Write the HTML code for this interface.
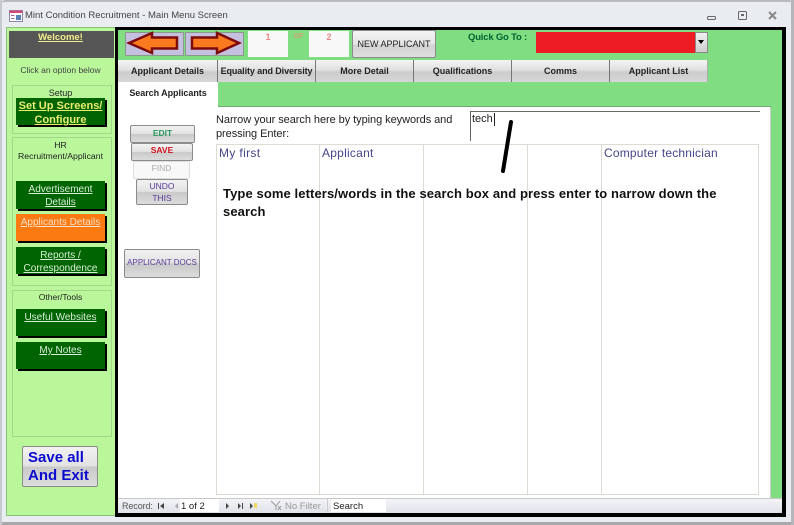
<!DOCTYPE html>
<html><head><meta charset="utf-8">
<style>
html,body{margin:0;padding:0}
body{width:794px;height:525px;overflow:hidden;position:relative;background:#fff;font-family:"Liberation Sans",sans-serif;}
div,span.a{position:absolute;box-sizing:border-box}
.t{white-space:nowrap;text-align:center;line-height:1}
.g{background:#006400;color:#d8eed8;text-decoration:underline;font-size:10px;text-align:center;line-height:13px;box-shadow:2px 2px 0 #000;padding-top:2px;white-space:nowrap}
.gb{background:linear-gradient(#f2f2f2 0,#e2e2e2 48%,#c9c9c9 52%,#dcdcdc 100%);border:1px solid #8b8b8b;border-radius:2px;text-align:center}
.tab{top:60px;height:22px;background:linear-gradient(#f4f4f4,#e0e0e0 45%,#cccccc 55%,#d6d6d6);border-right:1px solid #777;font-size:9px;font-weight:bold;text-align:center;line-height:23px;color:#222;white-space:nowrap}
.box{left:12px;width:100px;border:1px solid #a3d68a}
.v{top:144px;width:1px;height:350px;background:#dcdcd4}
</style></head><body>
<!-- window -->
<div style="left:0;top:0;width:794px;height:525px;background:#e9ecf1;border-top:2px solid #b8babd;border-radius:5px 5px 0 0"></div>
<div style="left:0;top:522px;width:794px;height:3px;background:#a8a8a8"></div>
<div style="left:0;top:0;width:2px;height:525px;background:#c6c9cd"></div>
<div style="left:791px;top:0;width:3px;height:525px;background:#b4b6ba"></div>
<!-- title -->
<svg style="position:absolute;left:9px;top:10px" width="14" height="13"><rect x=".5" y=".5" width="13" height="11" fill="#fff" stroke="#8a8aa8"/><rect x=".5" y=".5" width="13" height="2.5" fill="#d14a7a"/><rect x="2" y="5" width="3.5" height="1" fill="#9a6aa0"/><rect x="2" y="8" width="3.5" height="1" fill="#9a6aa0"/><rect x="7" y="5" width="5" height="5" fill="#5a80b8"/></svg>
<div class="t" style="left:25px;top:11px;font-size:9.5px;color:#444">Mint Condition Recruitment - Main Menu Screen</div>
<svg style="position:absolute;left:706px;top:8px" width="74" height="14" fill="none" stroke="#666"><rect x="1.5" y="8.5" width="8" height="3" rx="1"/><rect x="32.5" y="3.5" width="8" height="8" rx="1"/><rect x="35" y="6" width="3" height="2" fill="#666" stroke="none"/><path d="M63 4l7 7M70 4l-7 7" stroke="#888" stroke-width="2"/></svg>
<!-- sidebar -->
<div style="left:6px;top:27px;width:110px;height:489px;background:#baf79b;border:1px solid #8cc07a"></div>
<div style="left:9px;top:31px;width:105px;height:27px;background:#565656"></div>
<div class="t" style="left:9px;top:33px;width:103px;font-size:9.5px;font-weight:bold;color:#f4f08c;text-decoration:underline">Welcome!</div>
<div class="t" style="left:9px;top:66px;width:103px;font-size:8.5px;color:#444">Click an option below</div>
<div class="box" style="top:85px;height:49px"></div>
<div class="t" style="left:12px;top:89px;width:97px;font-size:9px;color:#222">Setup</div>
<div class="g" style="left:16px;top:98px;width:89px;height:27px;color:#ecec70;font-weight:bold;font-size:11px;padding-top:1px;line-height:14px">Set Up Screens/<br>Configure</div>
<div class="box" style="top:137px;height:149px"></div>
<div class="t" style="left:12px;top:140px;width:97px;font-size:8.7px;color:#222;line-height:11px">HR<br>Recruitment/Applicant</div>
<div class="g" style="left:16px;top:181px;width:89px;height:28px">Advertisement<br>Details</div>
<div class="g" style="left:16px;top:214px;width:89px;height:27px;background:#fb7a12;color:#f4e0c8">Applicants Details</div>
<div class="g" style="left:16px;top:247px;width:89px;height:27px">Reports /<br>Correspondence</div>
<div class="box" style="top:290px;height:147px"></div>
<div class="t" style="left:12px;top:293px;width:97px;font-size:8.5px;color:#222">Other/Tools</div>
<div class="g" style="left:16px;top:309px;width:89px;height:27px">Useful Websites</div>
<div class="g" style="left:16px;top:342px;width:89px;height:27px">My Notes</div>
<div class="gb" style="left:22px;top:446px;width:76px;height:41px;color:#0a0ad0;font-weight:bold;font-size:15px;line-height:18px;padding-top:2px;text-align:left;padding-left:5px;white-space:nowrap">Save all<br>And Exit</div>
<!-- frame -->
<div style="left:115px;top:27px;width:671px;height:490px;background:#000"></div>
<div style="left:118px;top:30px;width:664px;height:483px;background:#80dd82"></div>
<!-- arrows -->
<div style="left:125px;top:32px;width:59px;height:24px;background:#c5bfe0;border:1px solid #8a9a8a"></div>
<div style="left:185px;top:32px;width:59px;height:24px;background:#c5bfe0;border:1px solid #8a9a8a"></div>
<svg style="position:absolute;left:125px;top:30px" width="120" height="28"><path d="M4 13 L27 3 V7.5 H52 V18.5 H27 V23 Z" fill="#fb7a20" stroke="#7d0c0c" stroke-width="2.5"/><path d="M67 7.5 H92 V3 L114 13 L92 23 V18.5 H67 Z" fill="#fb7a20" stroke="#7d0c0c" stroke-width="2.5"/></svg>
<div style="left:248px;top:31px;width:40px;height:26px;background:#f8f8f8"></div>
<div class="t" style="left:248px;top:33px;width:40px;font-size:9px;font-weight:bold;color:#e88a8a">1</div>
<div class="t" style="left:288px;top:33px;width:21px;font-size:7px;font-weight:bold;color:#d8a070">OF</div>
<div style="left:309px;top:31px;width:40px;height:26px;background:#f8f8f8"></div>
<div class="t" style="left:309px;top:33px;width:40px;font-size:9px;font-weight:bold;color:#e88a8a">2</div>
<div class="gb" style="left:352px;top:30px;width:84px;height:28px;font-size:9px;line-height:26px;color:#222;background:linear-gradient(#f4f4f4,#e4e4e4 50%,#d2d2d2 55%,#dedede);white-space:nowrap">NEW APPLICANT</div>
<div class="t" style="left:468px;top:33px;font-size:9.5px;font-weight:bold;color:#063;letter-spacing:-.2px">Quick Go To :</div>
<div style="left:536px;top:32px;width:160px;height:21px;background:#ee1c25"></div>
<div style="left:695px;top:32px;width:13px;height:21px;background:linear-gradient(#f0f0f0,#cfcfcf);border:1px solid #8a8a8a"></div>
<svg style="position:absolute;left:698px;top:40px" width="7" height="5"><path d="M0 0H6L3 4Z" fill="#000"/></svg>
<!-- tabs -->
<div class="tab" style="left:118px;width:100px">Applicant Details</div>
<div class="tab" style="left:218px;width:98px;letter-spacing:-.1px">Equality and Diversity</div>
<div class="tab" style="left:316px;width:98px">More Detail</div>
<div class="tab" style="left:414px;width:98px">Qualifications</div>
<div class="tab" style="left:512px;width:98px">Comms</div>
<div class="tab" style="left:610px;width:98px;border-right:1px solid #aaa">Applicant List</div>
<div style="left:118px;top:82px;width:100px;height:26px;background:#fff"></div>
<div class="t" style="left:118px;top:89px;width:100px;font-size:9px;font-weight:bold;color:#222;letter-spacing:-.05px">Search Applicants</div>
<!-- page -->
<div style="left:118px;top:107px;width:653px;height:391px;background:#fff;border-right:1px solid #ccc"></div>
<div style="left:218px;top:106px;width:553px;height:1px;background:#6fa870"></div>
<div class="t" style="left:216px;top:113px;font-size:11px;line-height:14px;text-align:left;color:#222;letter-spacing:-.06px">Narrow your search here by typing keywords and<br>pressing Enter:</div>
<div style="left:470px;top:111px;width:290px;height:30px;border-top:1px solid #666;border-left:1px solid #666"></div>
<div class="t" style="left:472px;top:113px;font-size:11px;color:#222;border-right:1px solid #222;padding-right:1px;line-height:13px">tech</div>
<!-- table -->
<div style="left:216px;top:144px;width:543px;height:351px;border:1px solid #dcdcd4"></div>
<div class="v" style="left:319px"></div>
<div class="v" style="left:423px"></div>
<div class="v" style="left:527px"></div>
<div class="v" style="left:601px"></div>
<div class="t" style="left:219px;top:147px;font-size:12px;color:#45458a;letter-spacing:.35px">My first</div>
<div class="t" style="left:322px;top:147px;font-size:12px;color:#45458a;letter-spacing:.25px">Applicant</div>
<div class="t" style="left:604px;top:147px;font-size:12px;color:#45458a;letter-spacing:.2px">Computer technician</div>
<div class="t" style="left:223px;top:185px;font-size:13px;font-weight:bold;color:#111;text-align:left;line-height:18px;letter-spacing:.1px">Type some letters/words in the search box and press enter to narrow down the<br>search</div>
<svg style="position:absolute;left:498px;top:118px" width="18" height="58"><path d="M13 4 L5 53" stroke="#000" stroke-width="4" stroke-linecap="round"/></svg>
<!-- side buttons -->
<div class="gb" style="left:130px;top:125px;width:65px;height:18px;font-size:8.5px;font-weight:bold;color:#2a9a60;line-height:14px">EDIT</div>
<div class="gb" style="left:131px;top:143px;width:62px;height:18px;font-size:8.5px;font-weight:bold;color:#d01020;line-height:13px">SAVE</div>
<div class="gb" style="left:133px;top:161px;width:57px;height:18px;font-size:8.5px;color:#aaa;background:#f8f8f8;border-color:#ddd;line-height:13px">FIND</div>
<div class="gb" style="left:136px;top:179px;width:52px;height:26px;font-size:8.5px;color:#5a3a9a;line-height:12px">UNDO<br>THIS</div>
<div class="gb" style="left:124px;top:249px;width:76px;height:29px;font-size:8px;color:#5a3a9a;line-height:26px;white-space:nowrap">APPLICANT DOCS</div>
<!-- record bar -->
<div style="left:118px;top:498px;width:664px;height:15px;background:linear-gradient(#f3f4f8,#dfe2e8);border-top:1px solid #c8c8c8"></div>
<div class="t" style="left:122px;top:502px;font-size:9px;color:#555;letter-spacing:-.1px">Record:</div>
<svg style="position:absolute;left:157px;top:502px" width="100" height="9" fill="#444"><path d="M1 1h1v6H1zM7 1v6L3 4z"/><path d="M21 1v6l-3-3z" fill="#aaa"/><path d="M69 1v6l3-3z"/><path d="M81 1v6l3-3zM85 1h1v6h-1z"/><path d="M93 1v6l3-3z"/><rect x="97" y="1" width="4" height="5" fill="#f0d860"/></svg>
<div style="left:180px;top:499px;width:39px;height:13px;background:#fff"></div>
<div class="t" style="left:181px;top:502px;font-size:9.5px;color:#222">1 of 2</div>
<svg style="position:absolute;left:270px;top:500px" width="12" height="11" fill="none" stroke="#999"><path d="M1 1l5 5v4M10 1L6 6M8 6l3 4M11 6l-3 4"/></svg>
<div class="t" style="left:285px;top:502px;font-size:9.5px;color:#999">No Filter</div>
<div style="left:327px;top:499px;width:1px;height:13px;background:#ccc"></div>
<div style="left:331px;top:499px;width:55px;height:13px;background:#fff"></div>
<div class="t" style="left:333px;top:502px;font-size:9.5px;color:#222">Search</div>
</body></html>
